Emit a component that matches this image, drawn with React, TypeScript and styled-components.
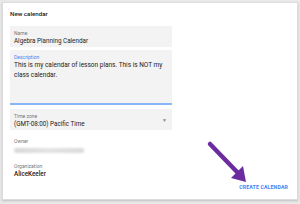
import styled, { createGlobalStyle } from 'styled-components';

const Global = createGlobalStyle`
    html, body {
        margin: 0;
        padding: 0;
        background: #e9e9e9;
        font-family: Roboto, "Liberation Sans", sans-serif;
        color: #222;
    }
`;

const Page = styled.div`
    width: 300px;
    height: 204px;
    padding: 2px 2px 0 2px;
    box-sizing: border-box;
`;

const Card = styled.div`
    position: relative;
    height: 198px;
    background: #fff;
    border: 1px solid #dcdcdc;
    box-shadow: 0 1px 2px rgba(0, 0, 0, 0.18);
    box-sizing: border-box;
    padding: 7px 9px 0 7px;
    display: flex;
    flex-direction: column;
`;

const Title = styled.div`
    font-size: 6.2px;
    font-weight: 500;
    line-height: 8px;
    height: 8px;
    margin-bottom: 8px;
`;

const Field = styled.div<{ $focused?: boolean; $tall?: boolean }>`
    position: relative;
    width: 162px;
    box-sizing: border-box;
    background: #f3f3f3;
    padding: 4px 4px 2px 4px;
    min-height: ${p => (p.$tall ? '55px' : '21px')};
    border-bottom: ${p => (p.$focused ? '2px solid #8ab4f8' : 'none')};
    margin-bottom: ${p => (p.$tall ? '4px' : '3px')};
`;

const Label = styled.div<{ $blue?: boolean }>`
    font-size: 5px;
    line-height: 6px;
    height: 6px;
    color: ${p => (p.$blue ? '#4285f4' : '#777')};
    margin-bottom: 1px;
`;

const Value = styled.div<{ $bold?: boolean }>`
    font-size: 6.3px;
    line-height: 8px;
    font-weight: ${p => (p.$bold ? 500 : 400)};
    color: #222;
`;

const Multiline = styled.div`
    font-size: 6.5px;
    line-height: 10px;
    margin-top: -1px;
    width: 152px;
    color: #222;
`;

const Caret = styled.span`
    position: absolute;
    right: 5px;
    top: 8px;
    font-size: 5px;
    color: #888;
`;

const Plain = styled.div<{ $gap?: number }>`
    padding-left: 4px;
    margin-top: ${p => p.$gap ?? 5}px;
`;

const Blurred = styled.div`
    width: 70px;
    height: 5px;
    margin-top: 4px;
    background: linear-gradient(90deg, #d8d8d8, #e3e3e3 50%, #dadada);
    filter: blur(1px);
    border-radius: 2px;
`;

const Footer = styled.div`
    margin-top: auto;
    margin-bottom: 9px;
    display: flex;
    justify-content: flex-end;
`;

const TextButton = styled.button`
    border: none;
    background: none;
    padding: 0;
    font-family: Roboto, "Liberation Sans", sans-serif;
    font-size: 5.2px;
    font-weight: 700;
    letter-spacing: 0.15px;
    color: #4285f4;
`;

const Arrow = styled.svg`
    position: absolute;
    left: 200px;
    top: 134px;
`;

export default function App() {
    return (
        <Page>
            <Global />
            <Card>
                <Title>New calendar</Title>
                <Field>
                    <Label>Name</Label>
                    <Value>Algebra Planning Calendar</Value>
                </Field>
                <Field $tall $focused>
                    <Label $blue>Description</Label>
                    <Multiline>
                        This is my calendar of lesson plans. This is NOT my class calendar.
                    </Multiline>
                </Field>
                <Field>
                    <Label>Time zone</Label>
                    <Value>(GMT-08:00) Pacific Time</Value>
                    <Caret>▼</Caret>
                </Field>
                <Plain>
                    <Label>Owner</Label>
                    <Blurred />
                </Plain>
                <Plain $gap={10}>
                    <Label>Organization</Label>
                    <Value $bold>AliceKeeler</Value>
                </Plain>
                <Footer>
                    <TextButton>CREATE CALENDAR</TextButton>
                </Footer>
                <Arrow width="60" height="56" viewBox="0 0 60 56">
                    <line x1="7" y1="7" x2="36" y2="37" stroke="#6b2ca0" strokeWidth="4.5" strokeLinecap="round" />
                    <polygon points="43,45 28,41 40,29" fill="#6b2ca0" />
                </Arrow>
            </Card>
        </Page>
    );
}
